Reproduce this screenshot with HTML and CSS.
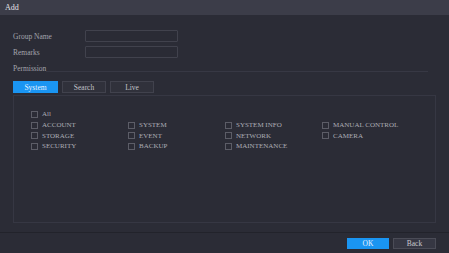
FILE: index.html
```html
<!DOCTYPE html>
<html>
<head>
<meta charset="utf-8">
<link rel="stylesheet" href="styles.css">
</head>
<body>
<div class="win">
  <div class="titlebar">Add</div>
  <div class="content">
    <div class="form-row"><span class="label">Group Name</span><span class="input"></span></div>
    <div class="form-row"><span class="label">Remarks</span><span class="input"></span></div>
    <div class="perm-head"><span class="perm-label">Permission</span><span class="perm-line"></span></div>
    <div class="tabs">
      <span class="tab active">System</span>
      <span class="tab">Search</span>
      <span class="tab">Live</span>
    </div>
    <div class="panel">
      <div class="grid">
        <label class="item all"><span class="cb"></span>All</label>
        <label class="item"><span class="cb"></span>ACCOUNT</label>
        <label class="item"><span class="cb"></span>SYSTEM</label>
        <label class="item"><span class="cb"></span>SYSTEM INFO</label>
        <label class="item"><span class="cb"></span>MANUAL CONTROL</label>
        <label class="item"><span class="cb"></span>STORAGE</label>
        <label class="item"><span class="cb"></span>EVENT</label>
        <label class="item"><span class="cb"></span>NETWORK</label>
        <label class="item"><span class="cb"></span>CAMERA</label>
        <label class="item"><span class="cb"></span>SECURITY</label>
        <label class="item"><span class="cb"></span>BACKUP</label>
        <label class="item"><span class="cb"></span>MAINTENANCE</label>
      </div>
    </div>
  </div>
  <div class="footer">
    <span class="btn primary">OK</span>
    <span class="btn">Back</span>
  </div>
</div>
</body>
</html>
```
FILE: styles.css
```css
* { box-sizing: border-box; }
html, body { margin: 0; padding: 0; }
body {
  width: 449px;
  height: 253px;
  background: #2b2c36;
  font-family: "Liberation Serif", "Times New Roman", serif;
  font-size: 7.5px;
  color: #a3a4ac;
  overflow: hidden;
}
.win { width: 449px; height: 253px; display: flex; flex-direction: column; }
.titlebar {
  height: 15px;
  background: #3c3d49;
  color: #e2e2e6;
  padding-left: 5px;
  line-height: 15px;
  font-size: 8px;
}
.content { padding: 15px 13px 0 13px; flex: 1; }
.form-row { display: flex; align-items: center; height: 12px; margin-bottom: 4px; }
.label { width: 72px; }
.input {
  width: 93px;
  height: 12px;
  border: 1px solid #41424d;
  border-radius: 1px;
  background: #2a2b35;
}
.perm-head { display: flex; align-items: flex-end; height: 10px; margin-top: 5px; width: 415px; }
.perm-label { line-height: 9px; }
.perm-line { flex: 1; height: 1px; background: #373844; margin-bottom: 1px; }
.tabs { display: flex; gap: 4px; margin-top: 8px; height: 12px; }
.tab {
  height: 12px;
  width: 44px;
  line-height: 11px;
  text-align: center;
  background: #30313b;
  border: 1px solid #41424d;
  color: #c2c3c8;
}
.tab.active { width: 45px; background: #1a95f2; border-color: #1a95f2; color: #e8f3ff; }
.panel {
  margin-top: 2px;
  width: 423px;
  height: 128px;
  border: 1px solid #363743;
  padding: 13px 0 0 17px;
}
.grid {
  display: grid;
  grid-template-columns: 97px 97px 97px 97px;
  grid-auto-rows: 10.7px;
}
.item { display: flex; align-items: center; color: #acadb5; white-space: nowrap; font-size: 7px; }
.item.all { grid-column: 1 / span 4; }
.cb {
  width: 7px;
  height: 7px;
  border: 1px solid #5c5d67;
  margin-right: 4px;
  flex: none;
}
.footer {
  height: 21px;
  border-top: 1px solid #22232b;
  display: flex;
  justify-content: flex-end;
  align-items: flex-start;
  gap: 4px;
  padding: 5px 13px 0 0;
}
.btn {
  width: 43px;
  height: 11px;
  line-height: 10px;
  text-align: center;
  background: #363743;
  border: 1px solid #4b4c57;
  color: #c8c9ce;
}
.btn.primary { width: 42px; background: #1a95f2; border-color: #1a95f2; color: #e8f3ff; }
```
